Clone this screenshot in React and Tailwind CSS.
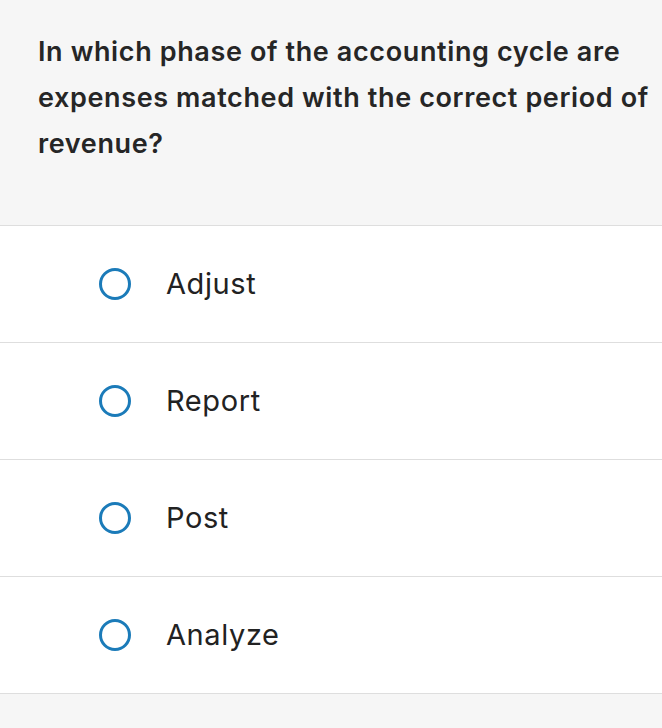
import React from 'react'

const options = ['Adjust', 'Report', 'Post', 'Analyze']

export default function App() {
  return (
    <div className="min-h-[728px] bg-[#f6f6f6] text-[#262626]" style={{ fontFamily: 'Inter, "Open Sans", sans-serif' }}>
      {/* Question */}
      <div className="pl-[38px] pr-[6px] pt-[29px] pb-[58px] border-b border-[#dedede]">
        <h1 className="text-[27px] font-semibold leading-[46px] tracking-[0.62px]">
          In which phase of the accounting cycle are expenses matched with the correct period of revenue?
        </h1>
      </div>

      {/* Options */}
      <div className="bg-white">
        {options.map(label => (
          <label key={label} className="flex items-center h-[117px] border-b border-[#dedede] cursor-pointer">
            <span className="ml-[99px] w-[32px] h-[32px] rounded-full border-[3px] border-[#1b7bb9] flex-shrink-0" />
            <span className="ml-[35px] text-[29px] text-[#222] leading-none tracking-[0.6px] -mt-[1px]">{label}</span>
          </label>
        ))}
      </div>
    </div>
  )
}
